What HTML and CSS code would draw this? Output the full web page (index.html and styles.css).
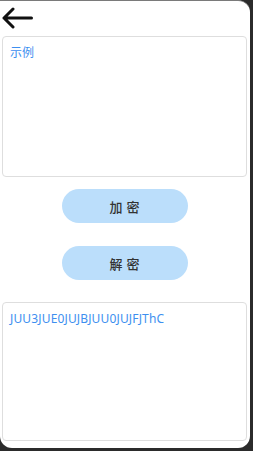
FILE: index.html
```html
<!DOCTYPE html>
<html lang="zh">
<head>
    <meta charset="UTF-8">
    <meta name="viewport" content="width=device-width, initial-scale=1.0">
    <title>加密解密</title>
    <link rel="stylesheet" href="styles.css">
</head>
<body>
    <div class="screen">
        <header class="top-bar">
            <button class="back-button" aria-label="返回">
                <svg width="31" height="22" viewBox="0 0 31 22">
                    <path d="M29.5 11 H2 M11 2 L2 11 L11 20" fill="none" stroke="#111" stroke-width="3" stroke-linecap="round" stroke-linejoin="round"/>
                </svg>
            </button>
        </header>

        <textarea id="source-text" class="text-box" placeholder="示例"></textarea>

        <div class="actions">
            <button id="encrypt-button" class="action-button">加密</button>
            <button id="decrypt-button" class="action-button">解密</button>
        </div>

        <textarea id="result-text" class="text-box result">JUU3JUE0JUJBJUU0JUJFJThC</textarea>
    </div>
</body>
</html>
```

FILE: styles.css
```css
* {
    margin: 0;
    padding: 0;
    box-sizing: border-box;
}

body {
    background-color: #2b2b2b;
    font-family: "Noto Sans", "Noto Sans CJK SC", sans-serif;
}

.screen {
    width: 250px;
    height: 448px;
    background-color: white;
    border-top: 1px solid #7a7a7a;
    border-radius: 0 12px 12px 12px;
    padding: 0 3px 0 2px;
    display: flex;
    flex-direction: column;
}

.top-bar {
    height: 35px;
    display: flex;
    align-items: flex-start;
}

.back-button {
    background: none;
    border: none;
    padding: 6px 0 0 0;
    cursor: pointer;
    display: flex;
}

.text-box {
    width: 100%;
    height: 141px;
    border: 1px solid #dedede;
    border-radius: 4px;
    padding: 8px 7px;
    resize: none;
    font-family: "Noto Sans", "Noto Sans CJK SC", sans-serif;
    font-size: 12px;
    line-height: 16px;
    color: #3d8ff0;
    outline: none;
}

.text-box.result {
    height: 139px;
    letter-spacing: 0.15px;
}

.text-box::placeholder {
    color: #3d8ff0;
}

.actions {
    display: flex;
    flex-direction: column;
    align-items: center;
    gap: 23px;
    padding: 12px 0 22px 0;
}

.action-button {
    width: 126px;
    height: 34px;
    border: none;
    border-radius: 17px;
    background-color: #bbdefb;
    color: #333;
    font-family: "Noto Sans CJK SC", sans-serif;
    font-size: 13px;
    font-weight: 500;
    letter-spacing: 4px;
    padding-left: 4px;
    cursor: pointer;
}
```
